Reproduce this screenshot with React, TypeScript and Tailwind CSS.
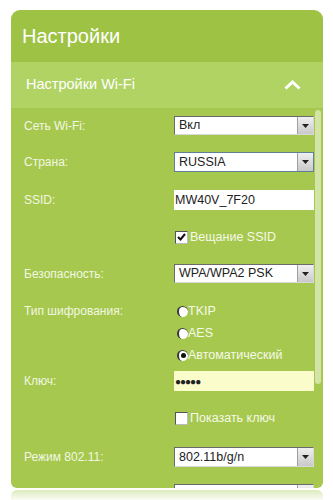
import React from 'react';

const font = { fontFamily: '"Liberation Sans", Arial, sans-serif' };

const Arrow: React.FC = () => (
  <div className="w-[16px] h-full flex items-center justify-center bg-gradient-to-b from-[#f0f0f0] to-[#c9c9c9] border-l border-[#a0a0a0]">
    <svg width="7" height="4" viewBox="0 0 7 4">
      <path d="M0 0h7L3.5 4z" fill="#222" />
    </svg>
  </div>
);

const Select: React.FC<{ value: string; focused?: boolean; h?: string }> = ({ value, focused }) => (
  <div
    className={`w-[140px] h-full flex items-stretch bg-white border ${
      focused ? 'border-[#5f7f9a]' : 'border-t-[#6b6b6b] border-l-[#6b6b6b] border-r-[#d8d8d8] border-b-[#d8d8d8]'
    }`}
  >
    <div className="flex-1 flex items-center pl-[4px] text-[12.5px] text-[#222]">{value}</div>
    <Arrow />
  </div>
);

const Label: React.FC<{ children: React.ReactNode }> = ({ children }) => (
  <div className="w-[150px] shrink-0 text-[12px] text-[#f1f7e2]">{children}</div>
);

const Checkbox: React.FC<{ checked?: boolean }> = ({ checked }) => (
  <div className="w-[13px] h-[13px] bg-white border border-t-[#555] border-l-[#555] border-r-[#bbb] border-b-[#bbb] flex items-center justify-center">
    {checked && (
      <svg width="9" height="8" viewBox="0 0 9 8">
        <path d="M1 4l2.5 2.5L8 1" stroke="#111" strokeWidth="2" fill="none" />
      </svg>
    )}
  </div>
);

const Radio: React.FC<{ checked?: boolean; label: string }> = ({ checked, label }) => (
  <div className="h-[18px] flex items-center">
    <div className="ml-[3px] w-[11px] h-[11px] rounded-full bg-white border-l-[2px] border-t border-[#3a3a3a] border-r-0 border-b-0 flex items-center justify-center">
      {checked && <div className="w-[5px] h-[5px] rounded-full bg-[#111]" />}
    </div>
    <span className="text-[12.5px] text-[#f4f9e8]">{label}</span>
  </div>
);

const App: React.FC = () => {
  return (
    <div className="w-[333px] h-[500px] bg-white overflow-hidden" style={font}>
      <div className="ml-[11px] mt-[10px] w-[312px]">
        <div className="rounded-t-[9px] overflow-hidden">
          <div className="h-[52px] bg-[#9ec243] flex items-center pl-[11px]">
            <span className="text-[20px] text-white">Настройки</span>
          </div>
          <div className="h-[46px] bg-[#b1d364] flex items-center justify-between pl-[15px] pr-[22px]">
            <span className="text-[14.5px] text-white">Настройки Wi-Fi</span>
            <svg width="17" height="10" viewBox="0 0 17 10">
              <path d="M1.5 8.5L8.5 2l7 6.5" stroke="#fff" strokeWidth="3" fill="none" />
            </svg>
          </div>
        </div>
        <div className="relative h-[380px] bg-[#a7c84f] overflow-hidden rounded-b-[6px] pl-[13px]">
          {/* scrollbar */}
          <div className="absolute right-[2px] top-[2px] w-[6px] h-[274px] rounded-full bg-[#d2e4a6]" />

          <div className="flex items-center mt-[8px] h-[19px]">
            <Label>Сеть Wi-Fi:</Label>
            <Select value="Вкл" />
          </div>
          <div className="flex items-center mt-[17px] h-[20px]">
            <Label>Страна:</Label>
            <Select value="RUSSIA" focused />
          </div>
          <div className="flex items-center mt-[18px] h-[20px]">
            <Label>SSID:</Label>
            <div className="w-[140px] h-full bg-white flex items-center pl-[1px] text-[12.5px] text-[#222]">
              MW40V_7F20
            </div>
          </div>
          <div className="flex items-center mt-[19px] h-[16px]">
            <Label>{''}</Label>
            <div className="flex items-center gap-[2px] ml-[1px]">
              <Checkbox checked />
              <span className="text-[12.5px] text-[#f4f9e8]">Вещание SSID</span>
            </div>
          </div>
          <div className="flex items-center mt-[19px] h-[19px]">
            <Label>Безопасность:</Label>
            <Select value="WPA/WPA2 PSK" />
          </div>
          <div className="flex mt-[19px]">
            <div className="h-[18px] flex items-center">
              <Label>Тип шифрования:</Label>
            </div>
            <div className="flex flex-col gap-[4px]">
              <Radio label="TKIP" />
              <Radio label="AES" />
              <Radio label="Автоматический" checked />
            </div>
          </div>
          <div className="flex items-center mt-[7px] h-[20px]">
            <Label>Ключ:</Label>
            <div className="w-[140px] h-full bg-[#fafdcb] flex items-center pl-[1px] text-[10px] tracking-[-1px] text-[#222]">
              ●●●●●
            </div>
          </div>
          <div className="flex items-center mt-[19px] h-[16px]">
            <Label>{''}</Label>
            <div className="flex items-center gap-[2px] ml-[1px]">
              <Checkbox />
              <span className="text-[12.5px] text-[#f4f9e8]">Показать ключ</span>
            </div>
          </div>
          <div className="flex items-center mt-[21px] h-[20px]">
            <Label>Режим 802.11:</Label>
            <Select value="802.11b/g/n" />
          </div>
          <div className="flex items-center mt-[17px] h-[20px]">
            <Label>{''}</Label>
            <Select value="" />
          </div>
        </div>
        <div className="h-[12px] mt-[2px] bg-gradient-to-b from-[#dcebbd] to-white rounded-t-[6px]" />
      </div>
    </div>
  );
};

export default App;
